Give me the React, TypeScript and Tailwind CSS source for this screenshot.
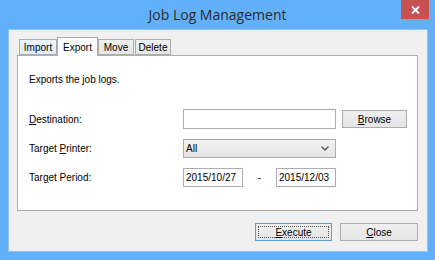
import React from 'react'

const ui = "font-['Tahoma','Liberation_Sans',sans-serif] text-[10px] text-black"

function Key({ k, rest, pre = '' }: { k: string; rest: string; pre?: string }) {
  return (
    <span>
      {pre}
      <span className="underline underline-offset-[1px]">{k}</span>
      {rest}
    </span>
  )
}

function Tab({ label, active, hover, w }: { label: string; active?: boolean; hover?: boolean; w: string }) {
  if (active) {
    return (
      <div className={`${w} relative z-10 -mb-px flex h-[19px] items-start justify-center border border-b-0 border-[#acacac] bg-white pt-[2px]`}>
        {label}
      </div>
    )
  }
  return (
    <div
      className={`${w} flex h-[16px] items-center justify-center border border-[#acacac] pt-[1px] ${
        hover ? 'bg-gradient-to-b from-[#ecf4fc] to-[#dcecfc]' : 'bg-gradient-to-b from-[#f0f0f0] to-[#e5e5e5]'
      }`}
    >
      {label}
    </div>
  )
}

function Btn({ children, w, main }: { children: React.ReactNode; w: string; main?: boolean }) {
  return (
    <div
      className={`${w} flex h-[18px] items-center justify-center border bg-gradient-to-b from-[#f0f0f0] to-[#e5e5e5] ${
        main ? 'border-[#5a9fe0] p-[2px]' : 'border-[#acacac]'
      }`}
    >
      {main ? (
        <div className="flex h-full w-full items-center justify-center border border-dotted border-[#555]">{children}</div>
      ) : (
        children
      )}
    </div>
  )
}

export default function App() {
  return (
    <div className="flex h-[260px] w-[435px] flex-col bg-[#62b0f9]">
      <div className="relative flex h-[29px] items-center justify-center pb-[1px]">
        <span className="font-['Segoe_UI','Open_Sans',sans-serif] text-[14px] text-[#2b2b2b]">Job Log Management</span>
        <div className="absolute right-[6px] top-0 flex h-[19px] w-[28px] items-center justify-center bg-[#c75050]">
          <svg width="9" height="8" viewBox="0 0 9 8">
            <path d="M1 0.5 L8 7.5 M8 0.5 L1 7.5" stroke="white" strokeWidth="1.8" />
          </svg>
        </div>
      </div>
      <div className={`mx-[7px] mb-[8px] ml-[8px] flex flex-1 flex-col border border-[#8fc4f5] bg-[#f0f0f0] ${ui}`}>
        <div className="ml-[10px] mt-[7px] flex items-end">
          <Tab label="Import" hover w="w-[38px]" />
          <Tab label="Export" active w="w-[41px]" />
          <Tab label="Move" w="w-[36px]" />
          <div className="w-[1px]" />
          <Tab label="Delete" w="w-[36px]" />
        </div>
        <div className="ml-[8px] flex h-[156px] w-[401px] flex-col border border-[#acacac] bg-white pl-[11px]">
          <div className="mt-[16px] flex h-[14px] items-center">Exports the job logs.</div>
          <div className="mt-[23px] flex h-[20px] items-center">
            <div className="w-[154px]">
              <Key k="D" rest="estination:" />
            </div>
            <div className="h-[20px] w-[153px] border border-[#abadb3] bg-white" />
            <div className="ml-[6px]">
              <Btn w="w-[65px]">
                <Key k="B" rest="rowse" />
              </Btn>
            </div>
          </div>
          <div className="mt-[10px] flex h-[19px] items-center">
            <div className="w-[154px]">
              <Key pre="Target " k="P" rest="rinter:" />
            </div>
            <div className="flex h-[19px] w-[153px] items-center justify-between border border-[#acacac] bg-gradient-to-b from-[#f2f2f2] to-[#e5e5e5] pl-[2px] pr-[6px]">
              <span>All</span>
              <svg width="8" height="5" viewBox="0 0 8 5">
                <path d="M0.5 0.5 L4 4 L7.5 0.5" stroke="#555" strokeWidth="1.3" fill="none" />
              </svg>
            </div>
          </div>
          <div className="mt-[10px] flex h-[19px] items-center">
            <div className="w-[154px]">
              <Key pre="Tar" k="g" rest="et Period:" />
            </div>
            <div className="flex h-[19px] w-[60px] items-center border border-[#abadb3] pl-[2px]">2015/10/27</div>
            <div className="flex w-[33px] justify-center">-</div>
            <div className="flex h-[19px] w-[60px] items-center border border-[#abadb3] pl-[2px]">2015/12/03</div>
          </div>
        </div>
        <div className="mr-[9px] mt-[12px] flex justify-end gap-[8px]">
          <Btn w="w-[77px]" main>
            <Key k="E" rest="xecute" />
          </Btn>
          <Btn w="w-[78px]">
            <Key k="C" rest="lose" />
          </Btn>
        </div>
      </div>
    </div>
  )
}
